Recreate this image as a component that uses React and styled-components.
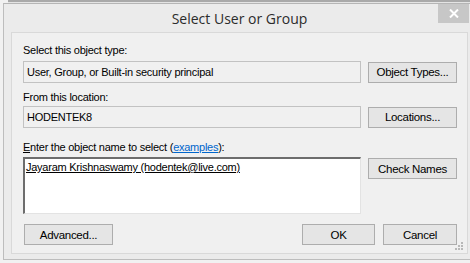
import React from "react";
import styled, { createGlobalStyle } from "styled-components";

const Global = createGlobalStyle`
  html, body {
    margin: 0;
    padding: 0;
    background: #f1f1f1;
    overflow: hidden;
  }
  body {
    font-family: "Liberation Sans", Arial, sans-serif;
    font-size: 11px;
    letter-spacing: -0.25px;
    color: #000;
  }
`;

const BackWindow = styled.div`
  height: 2px;
  margin-left: 8px;
  background: #a9a9a9;
  border-bottom: 1px solid #e4e4e4;
`;

const Frame = styled.div`
  box-sizing: border-box;
  margin-left: 3px;
  width: 473px;
  height: 257px;
  border: 1px solid #bdbdbd;
  border-top-color: #b5b5b5;
  background: #ebebeb;
  display: flex;
  flex-direction: column;
`;

const TitleBar = styled.div`
  height: 28px;
  display: grid;
  grid-template-columns: 1fr auto 1fr;
  align-items: start;
`;

const Title = styled.div`
  grid-column: 2;
  padding-top: 5px;
  font-family: "Open Sans", "Noto Sans", sans-serif;
  font-size: 14px;
  letter-spacing: 0;
  line-height: 20px;
  color: #2b2b2b;
`;

const CloseButton = styled.div`
  grid-column: 3;
  justify-self: end;
  margin-right: 6px;
  width: 31px;
  height: 19px;
  background: #c7c7c7;
  display: flex;
  align-items: center;
  justify-content: center;
`;

const Client = styled.div`
  position: relative;
  box-sizing: border-box;
  margin: 0 7px 5px 7px;
  height: 222px;
  border: 1px solid #d9d9d9;
  background: #f0f0f0;
  padding: 11px 10px 0 11px;
  display: grid;
  grid-template-columns: 338px 89px;
  column-gap: 7px;
  align-content: start;
`;

const Label = styled.div`
  grid-column: 1 / span 2;
  height: 13px;
  line-height: 13px;
  margin-top: ${(p) => p.$top || 0}px;
  white-space: nowrap;
`;

const Field = styled.div`
  box-sizing: border-box;
  height: 22px;
  margin-top: ${(p) => p.$top || 0}px;
  border: 1px solid #c2c2c2;
  background: #f0f0f0;
  padding: 0 3px;
  line-height: 20px;
  white-space: nowrap;
`;

const NameBox = styled.div`
  box-sizing: border-box;
  height: 57px;
  margin-top: ${(p) => p.$top || 0}px;
  border-style: solid;
  border-width: 2px 1px 1px 2px;
  border-color: #6d6d6d #e3e3e3 #e3e3e3 #6d6d6d;
  background: #fff;
  padding: 1px 1px;
  line-height: 14px;
  white-space: nowrap;
`;

const Resolved = styled.span`
  text-decoration: underline;
  text-underline-offset: 1px;
`;

const Button = styled.div`
  box-sizing: border-box;
  width: ${(p) => (p.$w ? `${p.$w}px` : "auto")};
  height: 21px;
  margin-top: ${(p) => p.$top || 0}px;
  align-self: ${(p) => p.$align || "center"};
  border: 1px solid #adadad;
  background: #e5e5e5;
  display: flex;
  align-items: center;
  justify-content: center;
  font-size: 11.5px;
  letter-spacing: -0.3px;
  white-space: nowrap;
`;

const Footer = styled.div`
  grid-column: 1 / span 2;
  margin-top: 10px;
  display: flex;
  gap: 8px;
  padding-left: 1px;
`;

const Spacer = styled.div`
  flex: 1;
`;

const Link = styled.span`
  color: #0066cc;
  text-decoration: underline;
`;

const Key = styled.span`
  text-decoration: underline;
`;

const Grip = styled.svg`
  position: absolute;
  right: 3px;
  bottom: 2px;
`;

export default function App() {
  return (
    <>
      <Global />
      <BackWindow />
      <Frame>
        <TitleBar>
          <Title>Select User or Group</Title>
          <CloseButton>
            <svg width="10" height="9" viewBox="0 0 10 9">
              <path d="M1 0.5 L9 8.5 M9 0.5 L1 8.5" stroke="#fff" strokeWidth="2" />
            </svg>
          </CloseButton>
        </TitleBar>
        <Client>
          <Label>Select this object type:</Label>
          <Field $top={4}>User, Group, or Built-in security principal</Field>
          <Button $top={4}>Object Types...</Button>

          <Label $top={8}>From this location:</Label>
          <Field $top={2}>HODENTEK8</Field>
          <Button $top={2}>Locations...</Button>

          <Label $top={13}>
            <Key>E</Key>nter the object name to select (<Link>examples</Link>):
          </Label>
          <NameBox $top={3}>
            <Resolved>Jayaram Krishnaswamy (hodentek@live.com)</Resolved>
          </NameBox>
          <Button $top={4} $align="start">Check Names</Button>

          <Footer>
            <Button $w={89}>Advanced...</Button>
            <Spacer />
            <Button $w={73}>OK</Button>
            <Button $w={74}>Cancel</Button>
          </Footer>

          <Grip width="9" height="9" viewBox="0 0 9 9">
            <g fill="#b8b8b8">
              <rect x="6" y="0" width="2" height="2" />
              <rect x="3" y="3" width="2" height="2" />
              <rect x="6" y="3" width="2" height="2" />
              <rect x="0" y="6" width="2" height="2" />
              <rect x="3" y="6" width="2" height="2" />
              <rect x="6" y="6" width="2" height="2" />
            </g>
          </Grip>
        </Client>
      </Frame>
    </>
  );
}
